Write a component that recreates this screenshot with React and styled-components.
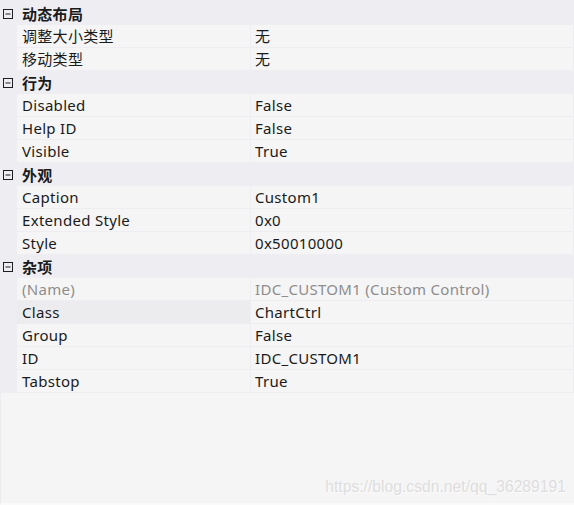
import React from "react";
import styled, { createGlobalStyle } from "styled-components";

const Global = createGlobalStyle`
  html, body { margin: 0; padding: 0; background: #eeeef2; }
  body { width: 574px; height: 505px; overflow: hidden; }
`;

const Grid = styled.div`
  position: relative;
  width: 574px;
  height: 505px;
  box-sizing: border-box;
  padding-top: 2px;
  background: #eeeef2;
  display: flex;
  flex-direction: column;
  gap: 1px;
  font-family: "Noto Sans", "Noto Sans CJK SC", sans-serif;
  font-size: 15px;
  letter-spacing: 0.3px;
  color: #1a1a1a;
`;

const Header = styled.div`
  height: 22px;
  display: grid;
  grid-template-columns: 22px 1fr;
  align-items: center;
  font-weight: 700;
`;

const Toggle = styled.svg`
  width: 10px;
  height: 10px;
  margin-left: 3px;
  margin-top: 1px;
`;

const Row = styled.div`
  height: 22px;
  display: grid;
  grid-template-columns: 233px 1fr;
  column-gap: 1px;
  margin-left: 17px;
  margin-right: 1px;
`;

const Cell = styled.div`
  background: ${(p) => (p.$selected ? "#ececef" : "#f5f5f5")};
  color: ${(p) => (p.$muted ? "#8d8d8d" : "#1a1a1a")};
  padding-left: ${(p) => (p.$value ? "4px" : "5px")};
  line-height: 22px;
  white-space: nowrap;
  overflow: hidden;
`;

const Empty = styled.div`
  flex: 1;
  background: #f5f5f5;
  border-left: 1px solid #ececef;
  border-bottom: 2px solid #fafafa;
`;

const Watermark = styled.div`
  position: absolute;
  right: 8px;
  bottom: 9px;
  font-family: "Liberation Sans", Arial, sans-serif;
  font-size: 15.7px;
  letter-spacing: 0;
  color: #dedede;
  text-shadow: 1px 1px 0 #fbfbfb;
`;

const data = [
  {
    title: "动态布局",
    rows: [
      ["调整大小类型", "无"],
      ["移动类型", "无"],
    ],
  },
  {
    title: "行为",
    rows: [
      ["Disabled", "False"],
      ["Help ID", "False"],
      ["Visible", "True"],
    ],
  },
  {
    title: "外观",
    rows: [
      ["Caption", "Custom1"],
      ["Extended Style", "0x0"],
      ["Style", "0x50010000"],
    ],
  },
  {
    title: "杂项",
    rows: [
      ["(Name)", "IDC_CUSTOM1 (Custom Control)", { muted: true }],
      ["Class", "ChartCtrl", { selected: true }],
      ["Group", "False"],
      ["ID", "IDC_CUSTOM1"],
      ["Tabstop", "True"],
    ],
  },
];

function Minus() {
  return (
    <Toggle viewBox="0 0 10 10">
      <rect x="0.5" y="0.5" width="9" height="9" fill="none" stroke="#1e1e1e" strokeWidth="1" />
      <line x1="2.5" y1="5" x2="7.5" y2="5" stroke="#1e1e1e" strokeWidth="1" />
    </Toggle>
  );
}

export default function App() {
  return (
    <>
      <Global />
      <Grid>
        {data.map((sec) => (
          <React.Fragment key={sec.title}>
            <Header>
              <Minus />
              <span>{sec.title}</span>
            </Header>
            {sec.rows.map(([name, value, opts = {}]) => (
              <Row key={name}>
                <Cell $muted={opts.muted} $selected={opts.selected}>{name}</Cell>
                <Cell $value $muted={opts.muted}>{value}</Cell>
              </Row>
            ))}
          </React.Fragment>
        ))}
        <Empty />
        <Watermark>https://blog.csdn.net/qq_36289191</Watermark>
      </Grid>
    </>
  );
}
